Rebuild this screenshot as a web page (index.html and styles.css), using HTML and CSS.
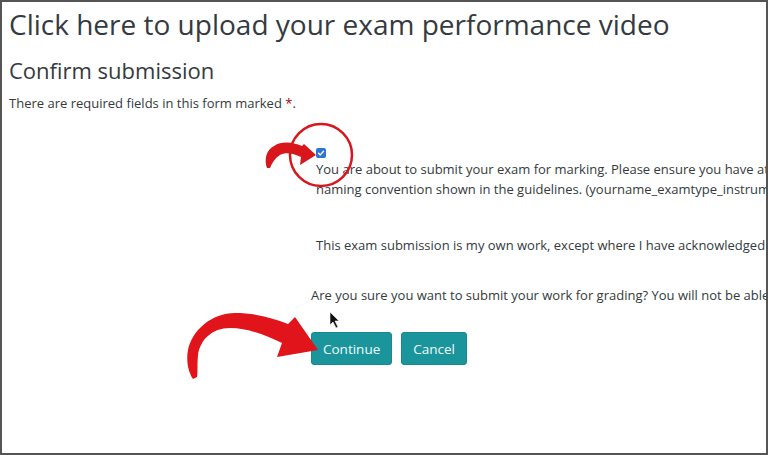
FILE: index.html
```html
<!DOCTYPE html>
<html lang="en">
<head>
<meta charset="utf-8">
<title>Confirm submission</title>
<link rel="stylesheet" href="styles.css">
</head>
<body>
<div class="frame">
  <div class="page">
    <h1 class="title">Click here to upload your exam performance video</h1>
    <h2 class="subtitle">Confirm submission</h2>
    <p class="req">There are required fields in this form marked <span class="star">*</span>.</p>
    <form class="form">
      <div class="fitem check-item">
        <span class="checkbox"><svg viewBox="0 0 10 10" width="10" height="10"><path d="M2.6 5.2 L4.3 6.9 L7.5 3.2" fill="none" stroke="#fff" stroke-width="1.4" stroke-linecap="round" stroke-linejoin="round"/></svg></span>
        <p class="line">You are about to submit your exam for marking. Please ensure you have attached your video file using the correct file<br>naming convention shown in the guidelines. (yourname_examtype_instrument_grade.mp4)</p>
      </div>
      <div class="fitem statement">
        <p class="line">This exam submission is my own work, except where I have acknowledged the use of the works of other people.</p>
      </div>
      <div class="fitem confirm">
        <p class="line">Are you sure you want to submit your work for grading? You will not be able to make any more changes.</p>
      </div>
      <div class="buttons">
        <button type="button" class="btn">Continue</button>
        <button type="button" class="btn">Cancel</button>
      </div>
    </form>
  </div>
  <svg class="annot" viewBox="0 0 768 455" width="768" height="455">
    <circle cx="321" cy="155" r="31" fill="none" stroke="#d8161c" stroke-width="2.5"/>
    <path d="M267,168 C264,160 266,150 274,146 C282,141 292,142 302,146 L304,144 L316,155 L300,165 L301,157 C293,153 285,152 280,155 C275,158 272,163 270,168 Z" fill="#d8161c"/>
    <path d="M193,379 C188,372 186,360 188,350 C192,330 212,313 235,313 C255,313 272,318 288,324 L295,317 L318,350 L277,357 L282,343 C265,335 248,328 230,328 C212,328 200,340 198,355 C197,365 198,373 197,377 Z" fill="#e0141a"/>
    <path d="M330,312 L330,325 L333,322 L336,328 L338,327 L335,321 L339,321 Z" fill="#111" stroke="#fff" stroke-width="0.6"/>
  </svg>
</div>
</body>
</html>
```
FILE: styles.css
```css
* { box-sizing: border-box; }
html, body { margin: 0; padding: 0; background: #fff; }
body { font-family: "Open Sans", "Noto Sans", sans-serif; color: #343a40; }
.frame {
  position: relative;
  width: 768px;
  height: 455px;
  border: 2px solid #555;
  overflow: hidden;
  background: #fff;
}
.page { padding: 0 0 0 7px; }
.title {
  margin: 0;
  padding-top: 3px;
  font-size: 28px;
  font-weight: 400;
  line-height: 38px;
  white-space: nowrap;
}
.subtitle {
  margin: 12px 0 0;
  font-size: 22px;
  font-weight: 400;
  line-height: 30px;
}
.req {
  margin: 8px 0 0;
  font-size: 13px;
  line-height: 20px;
}
.star { color: #a00000; }
.form { margin: 35px 0 0 302px; }
.fitem { white-space: nowrap; }
.line { margin: 0; font-size: 13px; line-height: 20px; }
.check-item { padding-left: 5px; }
.checkbox {
  display: block;
  width: 10px;
  height: 10px;
  border-radius: 2px;
  background: #2f72d8;
  margin-bottom: 1px;
}
.checkbox svg { display: block; }
.statement { padding-left: 5px; margin-top: 36px; }
.confirm { margin-top: 30px; }
.buttons { display: flex; gap: 9px; margin-top: 27px; }
.btn {
  font-family: inherit;
  font-size: 13.5px;
  color: #f2fafa;
  background: #1a959b;
  border: 1px solid #168a90;
  border-radius: 3px;
  height: 33px;
  padding: 0 11px;
}
.annot { position: absolute; left: -2px; top: -2px; pointer-events: none; }
```
